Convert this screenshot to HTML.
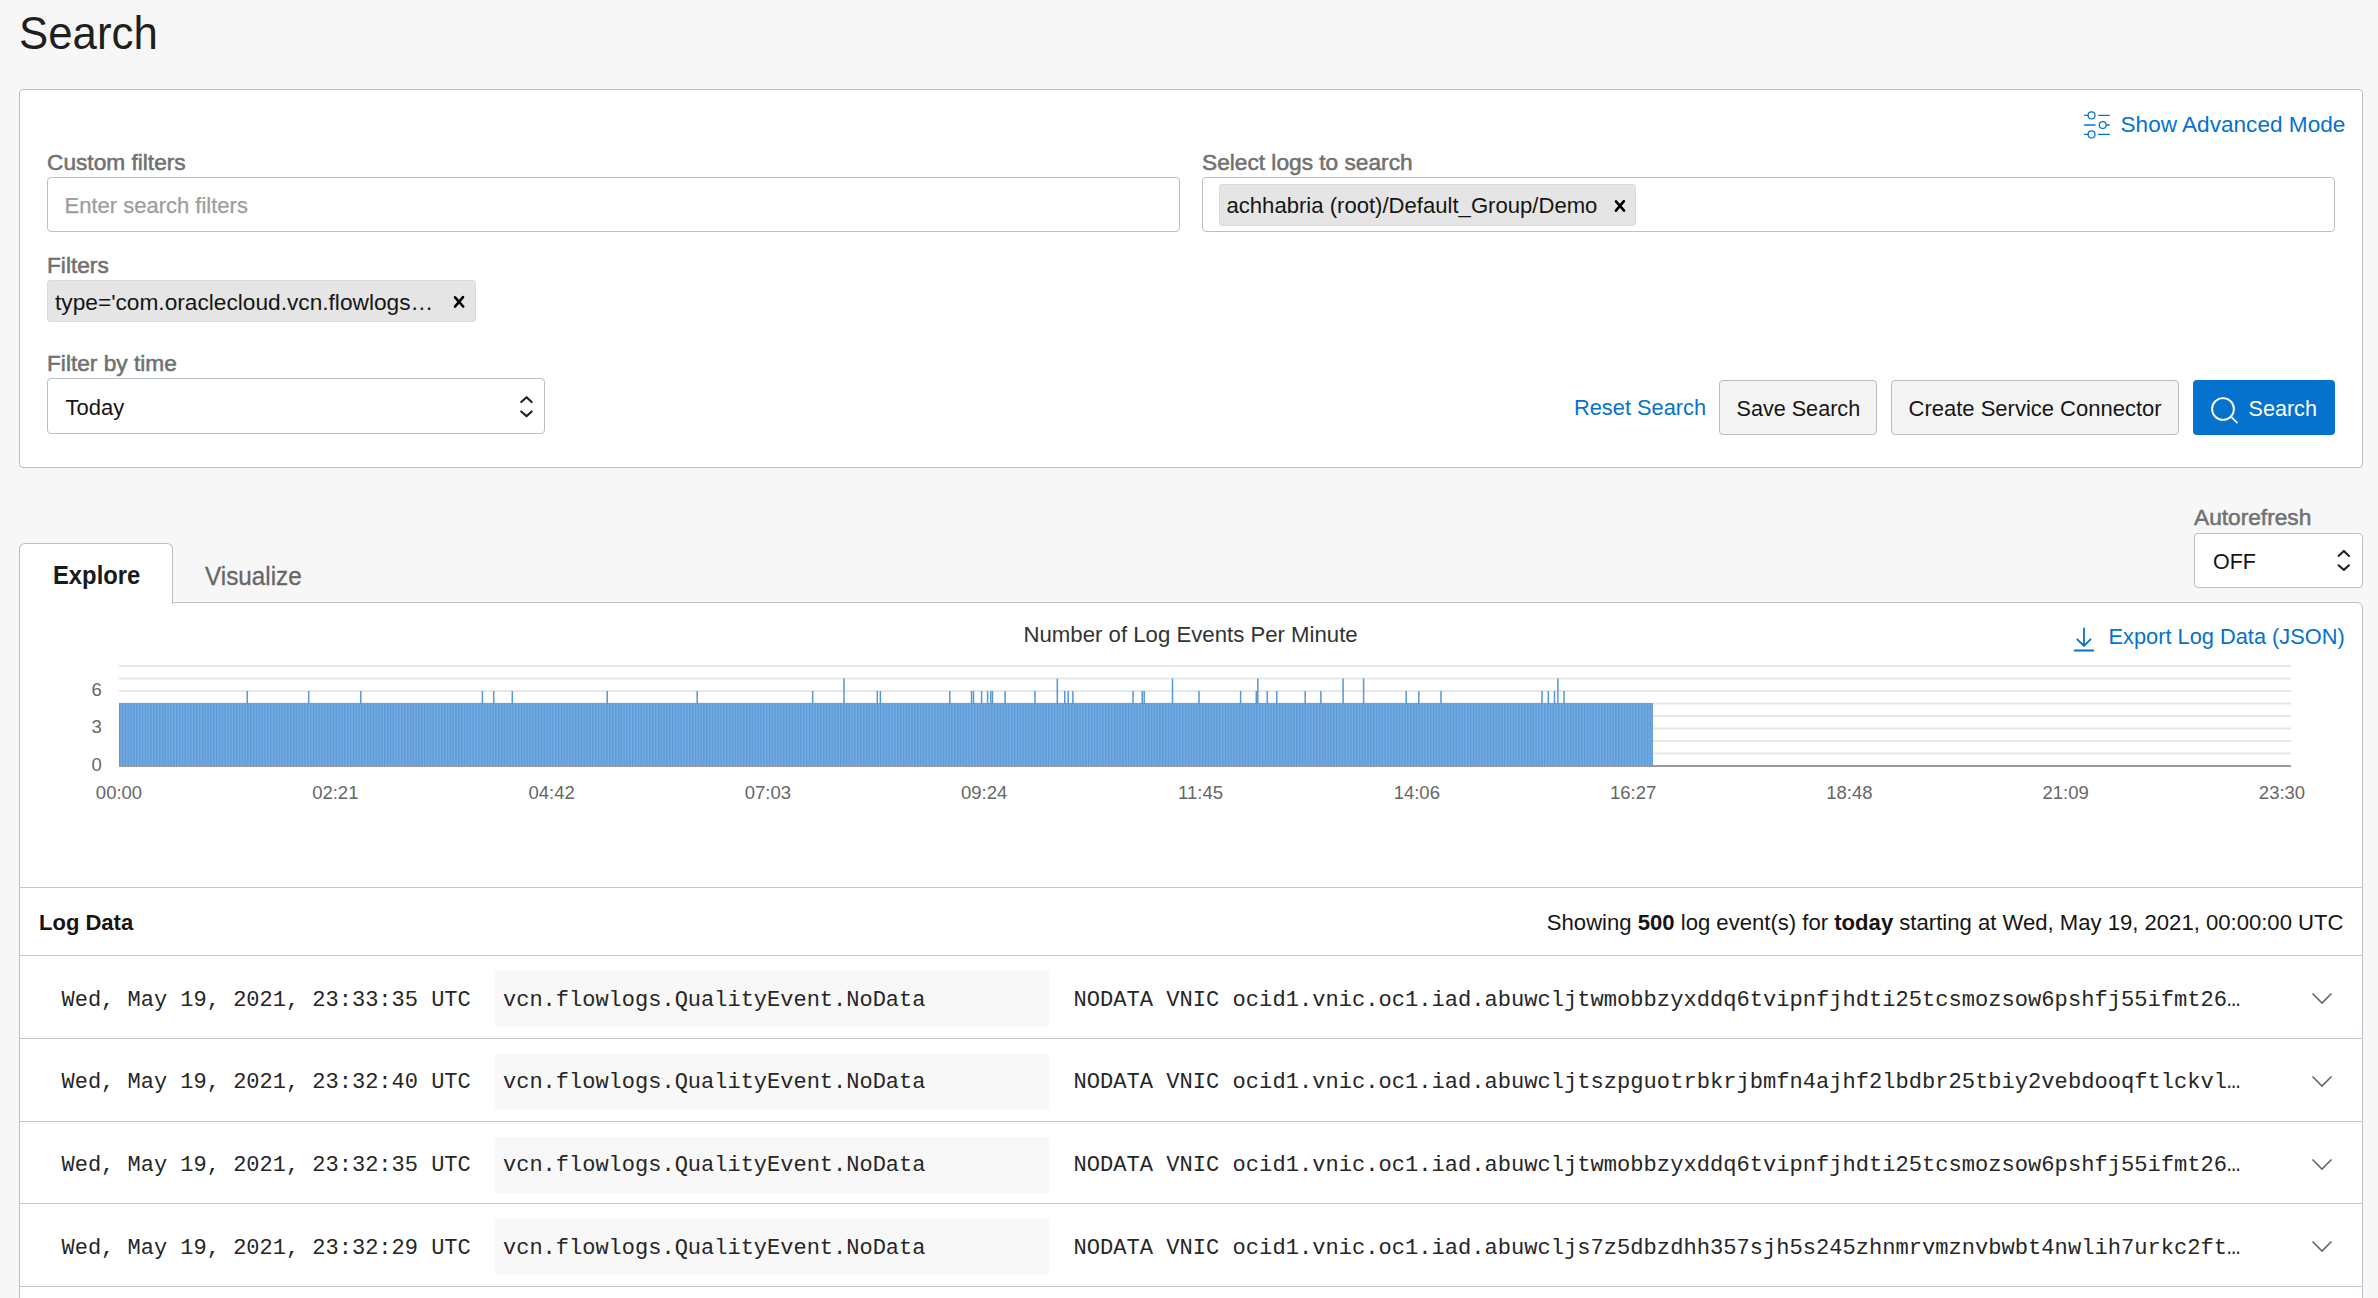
<!DOCTYPE html>
<html><head><meta charset="utf-8"><title>Search</title>
<style>
html,body{margin:0;padding:0;}
body{width:2378px;height:1298px;overflow:hidden;position:relative;background:#f7f7f7;font-family:"Liberation Sans",sans-serif;color:#161513;}
.a{position:absolute;}
.t{position:absolute;white-space:nowrap;line-height:1;}
.box{position:absolute;box-sizing:border-box;border:1px solid #b9c0c9;border-radius:4px;background:#fff;}
.lbl{color:#717171;font-size:22.7px;-webkit-text-stroke:0.55px #717171;}
.chip{position:absolute;box-sizing:border-box;background:#e5e5e5;border:1px solid #dcdcdc;border-radius:3px;}
.btn{position:absolute;box-sizing:border-box;background:#f4f4f4;border:1px solid #b5bdc6;border-radius:4px;}
.link{color:#0572ce;}
.mono{font-family:"Liberation Mono",monospace;font-size:22px;color:#262626;}
.hl{position:absolute;height:1px;background:#c1c8d0;}
</style></head>
<body>
<!-- Title -->
<div class="t" style="left:18.7px;top:9.2px;font-size:47px;color:#1f1f1f;transform:scaleX(0.932);transform-origin:0 0;">Search</div>

<!-- Panel 1 -->
<div class="box" style="left:19px;top:89px;width:2344px;height:379px;"></div>

<!-- Show advanced mode -->
<svg class="a" style="left:2078px;top:106px" width="38" height="38" viewBox="2078 106 38 38"><g stroke="#0572ce" stroke-width="1.4" fill="none" stroke-linecap="round"><line x1="2084.5" y1="115.4" x2="2087.90" y2="115.4"/><circle cx="2091.55" cy="115.4" r="3.45" stroke-width="1.25"/><line x1="2098.7" y1="115.4" x2="2109.2" y2="115.4"/><line x1="2084.5" y1="125.0" x2="2095.0" y2="125.0"/><circle cx="2102.74" cy="125.0" r="3.45" stroke-width="1.25"/><line x1="2106.39" y1="125.0" x2="2109.2" y2="125.0"/><line x1="2084.5" y1="134.4" x2="2087.90" y2="134.4"/><circle cx="2091.55" cy="134.4" r="3.45" stroke-width="1.25"/><line x1="2098.7" y1="134.4" x2="2109.2" y2="134.4"/></g></svg>
<div class="t link" style="left:2120.5px;top:114px;font-size:22.6px;">Show Advanced Mode</div>

<!-- Custom filters -->
<div class="t lbl" style="left:47px;top:151px;">Custom filters</div>
<div class="box" style="left:47px;top:177px;width:1133px;height:55px;"></div>
<div class="t" style="left:64.5px;top:194.5px;font-size:22px;color:#9d9d9d;-webkit-text-stroke:0.25px #9d9d9d;">Enter search filters</div>

<!-- Select logs -->
<div class="t lbl" style="left:1202px;top:151px;">Select logs to search</div>
<div class="box" style="left:1202px;top:177px;width:1133px;height:55px;"></div>
<div class="chip" style="left:1219px;top:184px;width:417px;height:42px;"></div>
<div class="t" style="left:1226.5px;top:194.5px;font-size:22.1px;">achhabria (root)/Default_Group/Demo</div>
<svg class="a" style="left:1608px;top:194px" width="24" height="24" viewBox="1608 194 24 24"><g stroke="#000" stroke-width="2.6" stroke-linecap="round"><line x1="1615.95" y1="201.40" x2="1624.10" y2="210.60"/><line x1="1623.90" y1="201.20" x2="1615.90" y2="210.70"/></g></svg>

<!-- Filters -->
<div class="t lbl" style="left:47px;top:253.5px;">Filters</div>
<div class="chip" style="left:47px;top:280px;width:429px;height:42px;"></div>
<div class="t" style="left:55px;top:290.5px;font-size:22.7px;">type='com.oraclecloud.vcn.flowlogs…</div>
<svg class="a" style="left:447px;top:290px" width="24" height="24" viewBox="447 290 24 24"><g stroke="#000" stroke-width="2.6" stroke-linecap="round"><line x1="455.05" y1="297.30" x2="463.20" y2="306.50"/><line x1="463.00" y1="297.10" x2="455.00" y2="306.60"/></g></svg>

<!-- Filter by time -->
<div class="t lbl" style="left:47px;top:352px;">Filter by time</div>
<div class="box" style="left:47px;top:378px;width:498px;height:56px;"></div>
<div class="t" style="left:65.5px;top:396.5px;font-size:22px;">Today</div>
<svg class="a" style="left:512px;top:390px" width="30" height="32" viewBox="512 390 30 32"><g stroke="#222" stroke-width="2.1" fill="none" stroke-linecap="round" stroke-linejoin="round"><polyline points="521.25,402.10 526.55,397.15 531.70,402.10"/><polyline points="521.25,411.45 526.55,416.10 531.70,411.45"/></g></svg>

<!-- Buttons -->
<div class="t link" style="left:1574px;top:397.4px;font-size:21.8px;">Reset Search</div>
<div class="btn" style="left:1719px;top:380px;width:158px;height:55px;"></div>
<div class="t" style="left:1736.5px;top:397.6px;font-size:21.6px;">Save Search</div>
<div class="btn" style="left:1891px;top:380px;width:288px;height:55px;"></div>
<div class="t" style="left:1908.5px;top:398px;font-size:22px;">Create Service Connector</div>
<div class="a" style="left:2193px;top:380px;width:142px;height:55px;background:#0572ce;border-radius:4px;"></div>
<svg class="a" style="left:2205px;top:390px" width="40" height="40" viewBox="2205 390 40 40"><g stroke="#fff" fill="none" stroke-linecap="round"><circle cx="2223" cy="409" r="10.9" stroke-width="1.9"/><line x1="2231.2" y1="416.8" x2="2237" y2="422.6" stroke-width="1.7"/></g></svg>
<div class="t" style="left:2248.5px;top:397.6px;font-size:21.6px;color:#fff;">Search</div>

<!-- Autorefresh -->
<div class="t lbl" style="left:2194px;top:505.6px;">Autorefresh</div>
<div class="box" style="left:2194px;top:533px;width:169px;height:55px;"></div>
<div class="t" style="left:2213px;top:551.5px;font-size:21.5px;">OFF</div>
<svg class="a" style="left:2329px;top:544px" width="30" height="32" viewBox="2329 544 30 32"><g stroke="#222" stroke-width="2.1" fill="none" stroke-linecap="round" stroke-linejoin="round"><polyline points="2338.55,555.90 2343.85,550.95 2349.00,555.90"/><polyline points="2338.55,565.25 2343.85,569.90 2349.00,565.25"/></g></svg>

<!-- Panel 2 -->
<div class="a" style="left:19px;top:602px;width:2344px;height:800px;box-sizing:border-box;border:1px solid #b9c0c9;border-top-right-radius:6px;background:#fff;"></div>
<!-- Tab -->
<div class="a" style="left:19px;top:543px;width:154px;height:61px;box-sizing:border-box;border:1px solid #b9c0c9;border-bottom:none;border-radius:6px 6px 0 0;background:#fff;"></div>
<div class="t" style="left:52.5px;top:562.2px;font-size:26px;font-weight:bold;color:#1a1a1a;transform:scaleX(0.915);transform-origin:0 0;">Explore</div>
<div class="t" style="left:205px;top:563px;font-size:26px;color:#666;-webkit-text-stroke:0.3px #666;transform:scaleX(0.934);transform-origin:0 0;">Visualize</div>

<!-- Chart -->
<div class="t" style="left:1023.5px;top:624px;font-size:22.2px;color:#333;">Number of Log Events Per Minute</div>
<svg class="a" style="left:2065px;top:620px" width="40" height="40" viewBox="2065 620 40 40"><g stroke="#0572ce" stroke-width="1.8" fill="none" stroke-linecap="round" stroke-linejoin="round"><line x1="2083.95" y1="628.5" x2="2083.95" y2="645.3"/><polyline points="2077.3,639.3 2083.95,645.9 2090.6,639.3"/><line x1="2074.6" y1="650.5" x2="2093.3" y2="650.5"/></g></svg>
<div class="t link" style="left:2108.5px;top:626px;font-size:21.8px;">Export Log Data (JSON)</div>

<svg id="chart" class="a" style="left:0;top:650px" width="2378" height="160" viewBox="0 650 2378 160">
  <g stroke="#e3e8ee" stroke-width="1.8">
    <line x1="119" x2="2291" y1="666" y2="666"/>
    <line x1="119" x2="2291" y1="678.5" y2="678.5"/>
    <line x1="119" x2="2291" y1="691" y2="691"/>
    <line x1="119" x2="2291" y1="703.5" y2="703.5"/>
    <line x1="119" x2="2291" y1="716" y2="716"/>
    <line x1="119" x2="2291" y1="728.5" y2="728.5"/>
    <line x1="119" x2="2291" y1="741" y2="741"/>
    <line x1="119" x2="2291" y1="753.5" y2="753.5"/>
  </g>
  <defs>
    <pattern id="stripes" x="119" y="0" width="2.85" height="10" patternUnits="userSpaceOnUse">
      <rect x="0" y="0" width="2.85" height="10" fill="#7aade1"/>
      <rect x="0" y="0" width="1.4" height="10" fill="#5899d9"/>
    </pattern>
  </defs>
  <rect x="119" y="703" width="1534" height="62" fill="url(#stripes)"/>
  <g fill="#5597d8"><rect x="246.45" y="691" width="1.5" height="13"/><rect x="307.95" y="691" width="1.5" height="13"/><rect x="360.05" y="691" width="1.5" height="13"/><rect x="481.65" y="691" width="1.5" height="13"/><rect x="492.95" y="691" width="1.5" height="13"/><rect x="511.55" y="691" width="1.5" height="13"/><rect x="606.45" y="691" width="1.5" height="13"/><rect x="696.45" y="691" width="1.5" height="13"/><rect x="811.95" y="691" width="1.5" height="13"/><rect x="876.55" y="691" width="1.5" height="13"/><rect x="879.65" y="691" width="1.5" height="13"/><rect x="949.05" y="691" width="1.5" height="13"/><rect x="970.75" y="691" width="1.5" height="13"/><rect x="972.75" y="691" width="1.5" height="13"/><rect x="980.85" y="691" width="1.5" height="13"/><rect x="986.85" y="691" width="1.5" height="13"/><rect x="990.05" y="691" width="1.5" height="13"/><rect x="991.75" y="691" width="1.5" height="13"/><rect x="1004.35" y="691" width="1.5" height="13"/><rect x="1034.25" y="691" width="1.5" height="13"/><rect x="1064.05" y="691" width="1.5" height="13"/><rect x="1067.45" y="691" width="1.5" height="13"/><rect x="1072.15" y="691" width="1.5" height="13"/><rect x="1132.25" y="691" width="1.5" height="13"/><rect x="1141.45" y="691" width="1.5" height="13"/><rect x="1143.45" y="691" width="1.5" height="13"/><rect x="1198.25" y="691" width="1.5" height="13"/><rect x="1239.85" y="691" width="1.5" height="13"/><rect x="1255.55" y="691" width="1.5" height="13"/><rect x="1266.45" y="691" width="1.5" height="13"/><rect x="1276.05" y="691" width="1.5" height="13"/><rect x="1304.45" y="691" width="1.5" height="13"/><rect x="1320.15" y="691" width="1.5" height="13"/><rect x="1405.45" y="691" width="1.5" height="13"/><rect x="1418.05" y="691" width="1.5" height="13"/><rect x="1440.25" y="691" width="1.5" height="13"/><rect x="1541.25" y="691" width="1.5" height="13"/><rect x="1547.55" y="691" width="1.5" height="13"/><rect x="1553.75" y="691" width="1.5" height="13"/><rect x="1563.25" y="691" width="1.5" height="13"/><rect x="843.25" y="678.5" width="1.5" height="25.5"/><rect x="1056.55" y="678.5" width="1.5" height="25.5"/><rect x="1171.75" y="678.5" width="1.5" height="25.5"/><rect x="1257.05" y="678.5" width="1.5" height="25.5"/><rect x="1342.35" y="678.5" width="1.5" height="25.5"/><rect x="1362.85" y="678.5" width="1.5" height="25.5"/><rect x="1557.15" y="678.5" width="1.5" height="25.5"/></g>
  <rect x="119" y="765" width="2172" height="2" fill="#9a9a9a"/>
</svg>
<div class="t" style="left:91.5px;top:681px;font-size:18.5px;color:#666;">6</div>
<div class="t" style="left:91.5px;top:718px;font-size:18.5px;color:#666;">3</div>
<div class="t" style="left:91.5px;top:756px;font-size:18.5px;color:#666;">0</div>
<div class="t" style="left:59.0px;width:120px;text-align:center;top:784px;font-size:18.5px;color:#666;">00:00</div>
<div class="t" style="left:275.3px;width:120px;text-align:center;top:784px;font-size:18.5px;color:#666;">02:21</div>
<div class="t" style="left:491.6px;width:120px;text-align:center;top:784px;font-size:18.5px;color:#666;">04:42</div>
<div class="t" style="left:707.9px;width:120px;text-align:center;top:784px;font-size:18.5px;color:#666;">07:03</div>
<div class="t" style="left:924.2px;width:120px;text-align:center;top:784px;font-size:18.5px;color:#666;">09:24</div>
<div class="t" style="left:1140.5px;width:120px;text-align:center;top:784px;font-size:18.5px;color:#666;">11:45</div>
<div class="t" style="left:1356.8px;width:120px;text-align:center;top:784px;font-size:18.5px;color:#666;">14:06</div>
<div class="t" style="left:1573.1px;width:120px;text-align:center;top:784px;font-size:18.5px;color:#666;">16:27</div>
<div class="t" style="left:1789.4px;width:120px;text-align:center;top:784px;font-size:18.5px;color:#666;">18:48</div>
<div class="t" style="left:2005.7px;width:120px;text-align:center;top:784px;font-size:18.5px;color:#666;">21:09</div>
<div class="t" style="left:2222.0px;width:120px;text-align:center;top:784px;font-size:18.5px;color:#666;">23:30</div>

<!-- Log data -->
<div class="hl" style="left:19px;top:887px;width:2344px;"></div>
<div class="t" style="left:39px;top:911.6px;font-size:22px;font-weight:bold;">Log Data</div>
<div class="t" style="right:34.5px;top:912px;font-size:22.1px;">Showing <b>500</b> log event(s) for <b>today</b> starting at Wed, May 19, 2021, 00:00:00 UTC</div>
<div class="hl" style="left:19px;top:955px;width:2344px;"></div>

<div class="a" style="left:495px;top:971.0px;width:554px;height:56px;background:#f8f8f8;"></div>
<div class="t mono" style="left:61.5px;top:989.6px;">Wed, May 19, 2021, 23:33:35 UTC</div>
<div class="t mono" style="left:503px;top:989.6px;">vcn.flowlogs.QualityEvent.NoData</div>
<div class="t mono" style="left:1073.5px;top:989.6px;font-size:22.1px;">NODATA VNIC ocid1.vnic.oc1.iad.abuwcljtwmobbzyxddq6tvipnfjhdti25tcsmozsow6pshfj55ifmt26…</div>
<svg class="a" style="left:2310px;top:991.0px" width="24" height="14" viewBox="0 0 24 14"><polyline points="2.5,2.5 12,12 21.5,2.5" stroke="#666" stroke-width="1.6" fill="none"/></svg>
<div class="hl" style="left:19px;top:1037.8px;width:2344px;"></div>
<div class="a" style="left:495px;top:1053.8px;width:554px;height:56px;background:#f8f8f8;"></div>
<div class="t mono" style="left:61.5px;top:1072.4px;">Wed, May 19, 2021, 23:32:40 UTC</div>
<div class="t mono" style="left:503px;top:1072.4px;">vcn.flowlogs.QualityEvent.NoData</div>
<div class="t mono" style="left:1073.5px;top:1072.4px;font-size:22.1px;">NODATA VNIC ocid1.vnic.oc1.iad.abuwcljtszpguotrbkrjbmfn4ajhf2lbdbr25tbiy2vebdooqftlckvl…</div>
<svg class="a" style="left:2310px;top:1073.8px" width="24" height="14" viewBox="0 0 24 14"><polyline points="2.5,2.5 12,12 21.5,2.5" stroke="#666" stroke-width="1.6" fill="none"/></svg>
<div class="hl" style="left:19px;top:1120.6px;width:2344px;"></div>
<div class="a" style="left:495px;top:1136.6px;width:554px;height:56px;background:#f8f8f8;"></div>
<div class="t mono" style="left:61.5px;top:1155.2px;">Wed, May 19, 2021, 23:32:35 UTC</div>
<div class="t mono" style="left:503px;top:1155.2px;">vcn.flowlogs.QualityEvent.NoData</div>
<div class="t mono" style="left:1073.5px;top:1155.2px;font-size:22.1px;">NODATA VNIC ocid1.vnic.oc1.iad.abuwcljtwmobbzyxddq6tvipnfjhdti25tcsmozsow6pshfj55ifmt26…</div>
<svg class="a" style="left:2310px;top:1156.6px" width="24" height="14" viewBox="0 0 24 14"><polyline points="2.5,2.5 12,12 21.5,2.5" stroke="#666" stroke-width="1.6" fill="none"/></svg>
<div class="hl" style="left:19px;top:1203.4px;width:2344px;"></div>
<div class="a" style="left:495px;top:1219.4px;width:554px;height:56px;background:#f8f8f8;"></div>
<div class="t mono" style="left:61.5px;top:1238.0px;">Wed, May 19, 2021, 23:32:29 UTC</div>
<div class="t mono" style="left:503px;top:1238.0px;">vcn.flowlogs.QualityEvent.NoData</div>
<div class="t mono" style="left:1073.5px;top:1238.0px;font-size:22.1px;">NODATA VNIC ocid1.vnic.oc1.iad.abuwcljs7z5dbzdhh357sjh5s245zhnmrvmznvbwbt4nwlih7urkc2ft…</div>
<svg class="a" style="left:2310px;top:1239.4px" width="24" height="14" viewBox="0 0 24 14"><polyline points="2.5,2.5 12,12 21.5,2.5" stroke="#666" stroke-width="1.6" fill="none"/></svg>
<div class="hl" style="left:19px;top:1286.2px;width:2344px;"></div>
</body></html>
